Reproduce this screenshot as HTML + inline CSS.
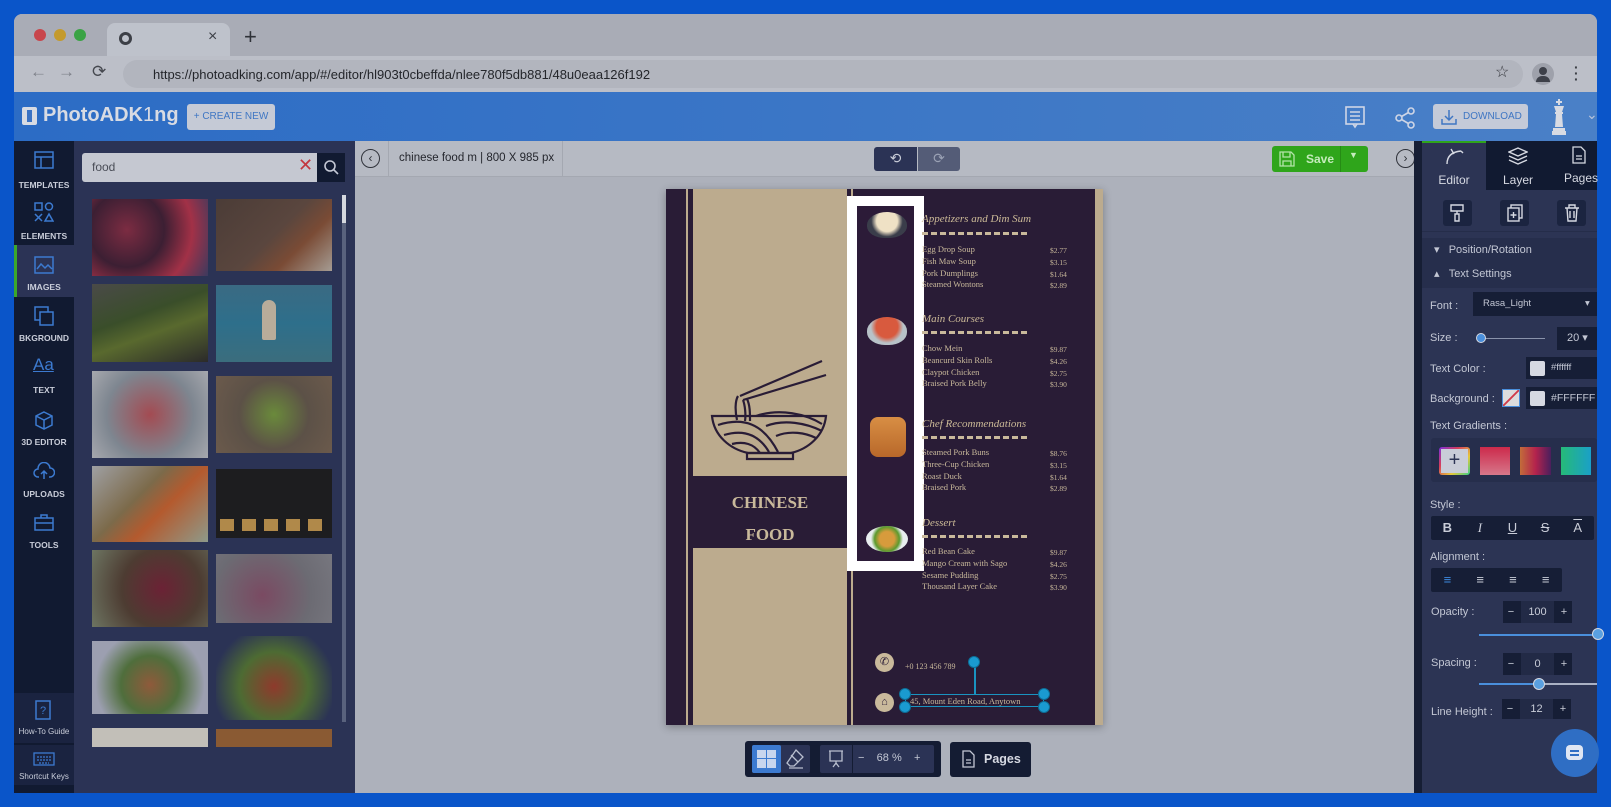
<!DOCTYPE html>
<html><head><meta charset="utf-8"><style>
*{margin:0;padding:0;box-sizing:border-box}
body{width:1611px;height:807px;background:#0a55c9;position:relative;overflow:hidden;font-family:"Liberation Sans",sans-serif}
.a{position:absolute}
.lbl{color:#c9cdd9;font-size:8.5px;font-weight:bold;text-align:center;width:60px;left:14px}
.rl{color:#c3c7d4;font-size:11px}
.mt{color:#c9b99b;font-family:"Liberation Serif",serif;font-size:8.5px;left:922px}
.mp{color:#c9b99b;font-family:"Liberation Serif",serif;font-size:7.5px;left:1050px}
.mh{color:#cdbb98;font-family:"Liberation Serif",serif;font-style:italic;font-size:11px;left:922px}
.dash{left:922px;width:106px;height:3px;background:repeating-linear-gradient(90deg,#c9b99b 0 6px,transparent 6px 9px)}
.btn{background:#1b2440;border-radius:3px}
</style></head><body>
<div class="a" style="left:14px;top:14px;width:1583px;height:779px;background:#acb0ba;border-radius:8px 8px 0 0"></div>
<div class="a" style="left:14px;top:14px;width:1583px;height:42px;background:#a9acb6;border-radius:8px 8px 0 0"></div>
<div class="a" style="left:34px;top:29px;width:12px;height:12px;border-radius:50%;background:#c8464c"></div>
<div class="a" style="left:54px;top:29px;width:12px;height:12px;border-radius:50%;background:#c49a2c"></div>
<div class="a" style="left:74px;top:29px;width:12px;height:12px;border-radius:50%;background:#3aa345"></div>
<div class="a" style="left:107px;top:23px;width:123px;height:33px;background:#bec2cb;border-radius:8px 8px 0 0"></div>
<div class="a" style="left:119px;top:32px;width:13px;height:13px;border-radius:50%;border:3px solid #3c3f46"></div>
<div class="a" style="left:208px;top:28px;color:#3c3f46;font-size:16px">×</div>
<div class="a" style="left:244px;top:24px;color:#2f3238;font-size:22px">+</div>
<div class="a" style="left:14px;top:56px;width:1583px;height:36px;background:#bcbfc8"></div>
<div class="a" style="left:30px;top:62px;color:#7d8089;font-size:17px">←</div>
<div class="a" style="left:58px;top:62px;color:#7d8089;font-size:17px">→</div>
<div class="a" style="left:92px;top:62px;color:#45484f;font-size:17px">⟳</div>
<div class="a" style="left:123px;top:60px;width:1400px;height:28px;background:#b2b5be;border-radius:14px"></div>
<div class="a" style="left:153px;top:67px;color:#24262b;font-size:13px">https://photoadking.com/app/#/editor/hl903t0cbeffda/nlee780f5db881/48u0eaa126f192</div>
<div class="a" style="left:1495px;top:62px;color:#34363c;font-size:16px">☆</div>
<div class="a" style="left:1532px;top:63px;width:22px;height:22px;border-radius:50%;background:#9ea1ab"></div>
<div class="a" style="left:1539px;top:67px;width:8px;height:8px;border-radius:50%;background:#3d4049"></div>
<div class="a" style="left:1536px;top:76px;width:14px;height:6px;border-radius:6px 6px 0 0;background:#3d4049"></div>
<div class="a" style="left:1574px;top:64px;color:#3c3f46;font-size:14px;font-weight:bold;line-height:6px">·<br>·<br>·</div>
<div class="a" style="left:14px;top:92px;width:1583px;height:49px;background:linear-gradient(90deg,#2c6cc5,#4a80c7)"></div>
<div class="a" style="left:22px;top:107px;width:15px;height:18px;background:#d8dbe3;border-radius:2px"></div>
<div class="a" style="left:27px;top:110px;width:5px;height:12px;background:#3a72c4"></div>
<div class="a" style="left:43px;top:104px;color:#d8dbe3;font-size:20px;font-weight:bold">PhotoADK<span style="font-weight:normal">1</span>ng</div>
<div class="a" style="left:187px;top:104px;width:88px;height:26px;background:#c5cad6;border-radius:3px;color:#3f76c3;font-size:10px;line-height:26px;text-align:center">+ CREATE NEW</div>
<svg class="a" style="left:1343px;top:105px" width="24" height="24" viewBox="0 0 24 24" fill="none" stroke="#cfd6e6" stroke-width="1.6"><rect x="3" y="2" width="18" height="17"/><path d="M7 7h10M7 11h10M7 15h10M10 19l2 3 2-3"/></svg>
<svg class="a" style="left:1393px;top:106px" width="24" height="24" viewBox="0 0 24 24" fill="none" stroke="#cfd6e6" stroke-width="1.6"><circle cx="18" cy="5" r="3"/><circle cx="6" cy="12" r="3"/><circle cx="18" cy="19" r="3"/><path d="M8.6 10.5l6.8-4M8.6 13.5l6.8 4"/></svg>
<div class="a" style="left:1433px;top:104px;width:95px;height:25px;background:#c4cad8;border-radius:3px;color:#3f76c3;font-size:10px;line-height:25px;padding-left:30px">DOWNLOAD</div>
<svg class="a" style="left:1440px;top:108px" width="18" height="18" viewBox="0 0 18 18" fill="none" stroke="#3f76c3" stroke-width="1.5"><path d="M9 2v10M5 8l4 4 4-4M2 11v5h14v-5"/></svg>
<svg class="a" style="left:1551px;top:99px" width="16" height="36" viewBox="0 0 16 36" fill="#d8dbe3"><rect x="7" y="0" width="2" height="6"/><rect x="5" y="2" width="6" height="2"/><path d="M3 7h10l-2 6H5z"/><rect x="4" y="13" width="8" height="2"/><path d="M5 15h6l1 13H4z"/><path d="M2 29h12v3H2zM1 32h14v4H1z"/></svg>
<div class="a" style="left:1586px;top:106px;color:#b8c4dc;font-size:14px">⌄</div>
<div class="a" style="left:14px;top:141px;width:60px;height:652px;background:#111a31"></div>
<div class="a" style="left:14px;top:245px;width:60px;height:52px;background:#2b3355;border-left:3px solid #3ba82c"></div>
<div class="a" style="left:14px;top:693px;width:60px;height:50px;background:#1a2340"></div>
<div class="a" style="left:14px;top:745px;width:60px;height:40px;background:#1a2340"></div>
<svg class="a" style="left:34px;top:151px" width="20" height="18" fill="none" stroke="#3c7ad0" stroke-width="1.5"><rect x="1" y="1" width="18" height="16"/><path d="M1 6h18M7 6v11"/></svg>
<div class="a lbl" style="top:180px">TEMPLATES</div>
<svg class="a" style="left:34px;top:202px" width="20" height="20" fill="none" stroke="#3c7ad0" stroke-width="1.5"><rect x="1" y="1" width="7" height="7"/><circle cx="15" cy="4.5" r="3.5"/><path d="M1 12l7 7M8 12l-7 7M15 12l4 7h-8z"/></svg>
<div class="a lbl" style="top:231px">ELEMENTS</div>
<svg class="a" style="left:34px;top:256px" width="20" height="18" fill="none" stroke="#3c7ad0" stroke-width="1.5"><rect x="1" y="1" width="18" height="16"/><path d="M3 13l4-5 4 4 3-3 4 4"/></svg>
<div class="a lbl" style="top:282px">IMAGES</div>
<svg class="a" style="left:34px;top:306px" width="20" height="20" fill="none" stroke="#3c7ad0" stroke-width="1.5"><rect x="1" y="1" width="13" height="13"/><rect x="6" y="6" width="13" height="13" fill="#111a31"/></svg>
<div class="a lbl" style="top:333px">BKGROUND</div>
<div class="a" style="left:33px;top:355px;color:#3c7ad0;font-size:17px;text-decoration:underline">Aa</div>
<div class="a lbl" style="top:385px">TEXT</div>
<svg class="a" style="left:34px;top:410px" width="20" height="20" fill="none" stroke="#3c7ad0" stroke-width="1.5"><path d="M10 2l8 4v9l-8 4-8-4V6z M2 6l8 4 8-4M10 10v9"/></svg>
<div class="a lbl" style="top:437px">3D EDITOR</div>
<svg class="a" style="left:33px;top:462px" width="22" height="18" fill="none" stroke="#3c7ad0" stroke-width="1.5"><path d="M6 15H5a4 4 0 010-8 6 6 0 0112-1 4 4 0 010 9h-1M11 17V9M8 12l3-3 3 3"/></svg>
<div class="a lbl" style="top:489px">UPLOADS</div>
<svg class="a" style="left:34px;top:513px" width="20" height="18" fill="none" stroke="#3c7ad0" stroke-width="1.5"><rect x="1" y="5" width="18" height="12"/><path d="M7 5V2h6v3M1 10h18"/></svg>
<div class="a lbl" style="top:540px">TOOLS</div>
<svg class="a" style="left:35px;top:700px" width="16" height="22" fill="none" stroke="#3c7ad0" stroke-width="1.5"><rect x="1" y="1" width="14" height="18"/><text x="5" y="14" font-size="11" fill="#3c7ad0" stroke="none" font-family="Liberation Sans">?</text></svg>
<div class="a lbl" style="top:727px;font-size:8px;font-weight:normal">How-To Guide</div>
<svg class="a" style="left:33px;top:752px" width="22" height="14" fill="none" stroke="#3c7ad0" stroke-width="1.3"><rect x="1" y="1" width="20" height="12"/><path d="M4 5h14M4 8h14M6 11h10" stroke-dasharray="2 1"/></svg>
<div class="a lbl" style="top:772px;font-size:8px;font-weight:normal">Shortcut Keys</div>
<div class="a" style="left:74px;top:141px;width:281px;height:652px;background:#2b3355"></div>
<div class="a" style="left:82px;top:153px;width:235px;height:29px;background:#c5c8d1;border-radius:3px 0 0 3px"></div>
<div class="a" style="left:92px;top:160px;color:#4a4d57;font-size:12px">food</div>
<div class="a" style="left:298px;top:155px;color:#c3363e;font-size:18px">✕</div>
<div class="a" style="left:317px;top:153px;width:28px;height:29px;background:#111a31"></div>
<svg class="a" style="left:323px;top:159px" width="16" height="16" fill="none" stroke="#c3c7d4" stroke-width="1.6"><circle cx="7" cy="7" r="5"/><path d="M11 11l4 4"/></svg>
<div class="a" style="left:342px;top:195px;width:4px;height:527px;background:#59627d"></div>
<div class="a" style="left:342px;top:195px;width:4px;height:28px;background:#d4d7de"></div>
<div class="a" style="left:92px;top:199px;width:116px;height:77px;background:radial-gradient(circle at 30% 40%,#7c2c42,#3c1f33 40%,#a23147 70%,#3b3a5e)"></div>
<div class="a" style="left:216px;top:199px;width:116px;height:72px;background:linear-gradient(135deg,#4b3c37,#5a463e 50%,#7a4b35 70%,#a59c93)"></div>
<div class="a" style="left:92px;top:284px;width:116px;height:78px;background:linear-gradient(160deg,#4a4a48,#3a4e2a 40%,#59692e 60%,#2b2a2a)"></div>
<div class="a" style="left:216px;top:285px;width:116px;height:77px;background:linear-gradient(180deg,#3a6a83,#2e6f8b 50%,#3b6d7d)"></div>
<div class="a" style="left:262px;top:300px;width:14px;height:40px;background:#b8ac9a;border-radius:7px 7px 2px 2px"></div>
<div class="a" style="left:92px;top:371px;width:116px;height:87px;background:radial-gradient(circle at 50% 50%,#a34b52,#7e8690 60%,#a6a8ae)"></div>
<div class="a" style="left:216px;top:376px;width:116px;height:77px;background:radial-gradient(circle at 50% 50%,#6a8a3b,#5c5147 50%,#6b5a4c)"></div>
<div class="a" style="left:92px;top:466px;width:116px;height:76px;background:linear-gradient(135deg,#9fa0a3,#7c6a4a 40%,#b45a2e 60%,#8e9a8a)"></div>
<div class="a" style="left:216px;top:469px;width:116px;height:69px;background:#1d1d1f"></div>
<div class="a" style="left:220px;top:519px;width:108px;height:12px;background:repeating-linear-gradient(90deg,#b0894a 0 14px,#1d1d1f 14px 22px)"></div>
<div class="a" style="left:92px;top:550px;width:116px;height:77px;background:radial-gradient(circle at 60% 50%,#6b2235,#4d3c32 50%,#6d7562)"></div>
<div class="a" style="left:216px;top:554px;width:116px;height:69px;background:radial-gradient(circle at 40% 60%,#7a4a62,#6c6b73 60%,#77777f)"></div>
<div class="a" style="left:92px;top:641px;width:116px;height:73px;background:radial-gradient(circle at 50% 60%,#8f5a3b,#4f6e3c 40%,#9c9fb0 75%)"></div>
<div class="a" style="left:216px;top:636px;width:116px;height:84px;background:radial-gradient(circle at 50% 60%,#8e3a2c,#4d6b33 45%,#2b3355 80%)"></div>
<div class="a" style="left:92px;top:728px;width:116px;height:19px;background:#c2bfb8"></div>
<div class="a" style="left:216px;top:729px;width:116px;height:18px;background:#8a5a33"></div>
<div class="a" style="left:355px;top:141px;width:1059px;height:652px;background:#adb1bb"></div>
<div class="a" style="left:355px;top:141px;width:1059px;height:36px;background:#b6bac3;border-bottom:1px solid #a4a8b1"></div>
<div class="a" style="left:361px;top:149px;width:19px;height:19px;border-radius:50%;border:1.5px solid #30333b;color:#30333b;font-size:12px;line-height:16px;text-align:center">‹</div>
<div class="a" style="left:388px;top:141px;width:1px;height:36px;background:#a4a8b1"></div>
<div class="a" style="left:399px;top:152px;color:#24262d;font-size:11.5px">chinese food m | 800 X 985 px</div>
<div class="a" style="left:562px;top:141px;width:1px;height:36px;background:#a4a8b1"></div>
<div class="a" style="left:874px;top:147px;width:43px;height:24px;background:#2b3355;border-radius:3px 0 0 3px;color:#c9cdd8;font-size:14px;text-align:center;line-height:22px">⟲</div>
<div class="a" style="left:918px;top:147px;width:42px;height:24px;background:#545c77;border-radius:0 3px 3px 0;color:#9aa1b4;font-size:14px;text-align:center;line-height:22px">⟳</div>
<div class="a" style="left:1272px;top:146px;width:96px;height:26px;background:#2fa51b;border-radius:3px"></div>
<div class="a" style="left:1340px;top:146px;width:1px;height:26px;background:#268b15"></div>
<svg class="a" style="left:1279px;top:151px" width="16" height="16" fill="none" stroke="#b3e4a8" stroke-width="1.3"><path d="M1 1h11l3 3v11H1z M4 1v5h7V1M4 15v-5h8v5"/></svg>
<div class="a" style="left:1306px;top:152px;color:#c5ecbd;font-size:12px;font-weight:bold">Save</div>
<div class="a" style="left:1349px;top:150px;color:#c5ecbd;font-size:9px">▼</div>
<div class="a" style="left:1396px;top:149px;width:19px;height:19px;border-radius:50%;border:1.5px solid #30333b;color:#30333b;font-size:12px;line-height:16px;text-align:center">›</div>
<div class="a" style="left:1414px;top:141px;width:8px;height:652px;background:#161e34"></div>
<div class="a" style="left:666px;top:189px;width:437px;height:536px;background:#291c36;box-shadow:0 2px 8px rgba(0,0,0,.3)"></div>
<div class="a" style="left:686px;top:189px;width:2px;height:536px;background:#bcab8e"></div>
<div class="a" style="left:693px;top:189px;width:154px;height:536px;background:#bcab8e"></div>
<div class="a" style="left:693px;top:476px;width:154px;height:72px;background:#291c36"></div>
<div class="a" style="left:693px;top:487px;width:154px;text-align:center;color:#c9b99b;font-family:'Liberation Serif',serif;font-weight:bold;font-size:17px;line-height:32px">CHINESE<br>FOOD</div>
<div class="a" style="left:851px;top:189px;width:2px;height:536px;background:#bcab8e"></div>
<div class="a" style="left:1095px;top:189px;width:8px;height:536px;background:#bcab8e"></div>
<svg class="a" style="left:710px;top:358px" width="125" height="105" viewBox="0 0 125 105" fill="none" stroke="#291c36" stroke-width="2.2"><path d="M30 38L112 3M33 42L116 17M28 38c-3 5-3 15-1 24M33 42c2 5 3 15 2 21M37 41c3 6 3 14 3 22"/><path d="M2 58h114c-2 20-18 33-35 37H38C20 91 4 78 2 58z"/><path d="M37 95h46v6H37z"/><path d="M8 67c25-8 45-2 60 27M14 77c20-6 35 0 45 17M22 86c12-3 22 0 28 9M46 58c24-8 50-2 66 8M56 68c18-7 40-3 56 5M66 78c14-6 30-3 40 2"/></svg>
<div class="a" style="left:847px;top:196px;width:77px;height:375px;background:#fff"></div>
<div class="a" style="left:857px;top:206px;width:57px;height:355px;background:#2c1b38"></div>
<div class="a" style="left:867px;top:212px;width:40px;height:26px;border-radius:50% 50% 45% 45%;background:radial-gradient(circle at 50% 35%,#efe1c5 40%,#3a3d4a 60%)"></div>
<div class="a" style="left:867px;top:317px;width:40px;height:28px;border-radius:50% 50% 45% 45%;background:radial-gradient(circle at 50% 35%,#d85a3e 40%,#b8c2c8 60%)"></div>
<div class="a" style="left:870px;top:417px;width:36px;height:40px;border-radius:8px;background:linear-gradient(180deg,#d88e44,#b8682a)"></div>
<div class="a" style="left:866px;top:526px;width:42px;height:26px;border-radius:50%;background:radial-gradient(circle,#d79b3c 30%,#5c9a2e 50%,#e9eef0 65%)"></div>
<div class="a mh" style="top:213px">Appetizers and Dim Sum</div>
<div class="a dash" style="top:232px"></div>
<div class="a mt" style="top:244px;line-height:11.8px">Egg Drop Soup<br>Fish Maw Soup<br>Pork Dumplings<br>Steamed Wontons</div>
<div class="a mp" style="top:245px;line-height:11.8px">$2.77<br>$3.15<br>$1.64<br>$2.89</div>
<div class="a mh" style="top:313px">Main Courses</div>
<div class="a dash" style="top:331px"></div>
<div class="a mt" style="top:343px;line-height:11.8px">Chow Mein<br>Beancurd Skin Rolls<br>Claypot Chicken<br>Braised Pork Belly</div>
<div class="a mp" style="top:344px;line-height:11.8px">$9.87<br>$4.26<br>$2.75<br>$3.90</div>
<div class="a mh" style="top:418px">Chef Recommendations</div>
<div class="a dash" style="top:436px"></div>
<div class="a mt" style="top:447px;line-height:11.8px">Steamed Pork Buns<br>Three-Cup Chicken<br>Roast Duck<br>Braised Pork</div>
<div class="a mp" style="top:448px;line-height:11.8px">$8.76<br>$3.15<br>$1.64<br>$2.89</div>
<div class="a mh" style="top:517px">Dessert</div>
<div class="a dash" style="top:535px"></div>
<div class="a mt" style="top:546px;line-height:11.8px">Red Bean Cake<br>Mango Cream with Sago<br>Sesame Pudding<br>Thousand Layer Cake</div>
<div class="a mp" style="top:547px;line-height:11.8px">$9.87<br>$4.26<br>$2.75<br>$3.90</div>
<div class="a" style="left:875px;top:653px;width:19px;height:19px;border-radius:50%;background:#c9b99b;color:#291c36;font-size:11px;text-align:center;line-height:19px">✆</div>
<div class="a mt" style="left:905px;top:662px;font-size:8px">+0 123 456 789</div>
<div class="a" style="left:875px;top:693px;width:19px;height:19px;border-radius:50%;background:#c9b99b;color:#291c36;font-size:11px;text-align:center;line-height:19px">⌂</div>
<div class="a mt" style="left:910px;top:696px;font-size:8.5px">45, Mount Eden Road, Anytown</div>
<div class="a" style="left:974px;top:662px;width:1.5px;height:32px;background:#1a93c0"></div>
<div class="a" style="left:905px;top:694px;width:139px;height:13px;border:1.5px solid #1a93c0"></div>
<div class="a" style="left:968px;top:656px;width:12px;height:12px;border-radius:50%;background:#1a9ad0;border:1px solid #0d6f98"></div>
<div class="a" style="left:899px;top:688px;width:12px;height:12px;border-radius:50%;background:#1a9ad0;border:1px solid #0d6f98"></div>
<div class="a" style="left:1038px;top:688px;width:12px;height:12px;border-radius:50%;background:#1a9ad0;border:1px solid #0d6f98"></div>
<div class="a" style="left:899px;top:701px;width:12px;height:12px;border-radius:50%;background:#1a9ad0;border:1px solid #0d6f98"></div>
<div class="a" style="left:1038px;top:701px;width:12px;height:12px;border-radius:50%;background:#1a9ad0;border:1px solid #0d6f98"></div>
<div class="a" style="left:745px;top:741px;width:196px;height:36px;background:#141c33;border-radius:3px"></div>
<div class="a" style="left:752px;top:745px;width:58px;height:28px;background:#2b3355;border-radius:2px"></div>
<div class="a" style="left:752px;top:745px;width:29px;height:28px;background:#3c7ad0;border-radius:2px"></div>
<div class="a" style="left:757px;top:750px;width:9px;height:8px;background:#c9d6ee"></div><div class="a" style="left:767px;top:750px;width:9px;height:8px;background:#c9d6ee"></div>
<div class="a" style="left:757px;top:759px;width:9px;height:9px;background:#c9d6ee"></div><div class="a" style="left:767px;top:759px;width:9px;height:9px;background:#c9d6ee"></div>
<svg class="a" style="left:786px;top:749px" width="18" height="20" fill="none" stroke="#b9bfcf" stroke-width="1.3"><path d="M10 1l7 7-9 9H4l-3-3z M5 6l7 7M3 19h14"/></svg>
<div class="a" style="left:820px;top:745px;width:114px;height:28px;background:#2b3355;border-radius:2px"></div>
<div class="a" style="left:852px;top:745px;width:1px;height:28px;background:#141c33"></div>
<svg class="a" style="left:828px;top:750px" width="16" height="18" fill="none" stroke="#b9bfcf" stroke-width="1.3"><path d="M1 1h14M2 1v10h12V1M8 11v2M5 17l3-4 3 4"/></svg>
<div class="a" style="left:858px;top:752px;color:#c3c7d4;font-size:11px">−&nbsp;&nbsp;&nbsp;&nbsp;68 %&nbsp;&nbsp;&nbsp;&nbsp;+</div>
<div class="a" style="left:950px;top:742px;width:81px;height:35px;background:#141c33;border-radius:3px"></div>
<svg class="a" style="left:962px;top:750px" width="13" height="18" fill="none" stroke="#c3c7d4" stroke-width="1.3"><path d="M1 1h7l4 4v12H1z M4 10h5M4 13h5"/></svg>
<div class="a" style="left:984px;top:752px;color:#d6d9e2;font-size:12.5px;font-weight:bold">Pages</div>
<div class="a" style="left:1422px;top:141px;width:175px;height:652px;background:#2c3454"></div>
<div class="a" style="left:1486px;top:141px;width:111px;height:49px;background:#111a31"></div>
<div class="a" style="left:1422px;top:141px;width:64px;height:2px;background:#2fa51b"></div>
<svg class="a" style="left:1444px;top:146px" width="20" height="20" fill="none" stroke="#d6d9e2" stroke-width="1.4"><path d="M3 18c0-7 4-12 14-13M10 8l-3-5M17 5l2 2"/></svg>
<div class="a" style="left:1422px;top:173px;width:64px;text-align:center;color:#d6d9e2;font-size:12px">Editor</div>
<svg class="a" style="left:1508px;top:147px" width="20" height="18" fill="none" stroke="#d6d9e2" stroke-width="1.4"><path d="M10 1l9 4-9 4-9-4z M1 9l9 4 9-4M1 13l9 4 9-4"/></svg>
<div class="a" style="left:1486px;top:173px;width:64px;text-align:center;color:#d6d9e2;font-size:12px">Layer</div>
<svg class="a" style="left:1572px;top:146px" width="14" height="18" fill="none" stroke="#d6d9e2" stroke-width="1.3"><path d="M1 1h8l4 4v12H1z M4 10h6M4 13h6"/></svg>
<div class="a" style="left:1564px;top:171px;color:#d6d9e2;font-size:12px">Pages</div>
<div class="a btn" style="left:1443px;top:200px;width:29px;height:26px"></div>
<svg class="a" style="left:1449px;top:204px" width="16" height="18" fill="none" stroke="#d6d9e2" stroke-width="1.4"><path d="M2 1h12v6H2zM8 7v3M6 10h4v7H6z"/></svg>
<div class="a btn" style="left:1500px;top:200px;width:29px;height:26px"></div>
<svg class="a" style="left:1507px;top:204px" width="16" height="18" fill="none" stroke="#d6d9e2" stroke-width="1.4"><rect x="4" y="1" width="11" height="13"/><rect x="1" y="4" width="11" height="13" fill="#1b2440"/><path d="M6.5 8v6M3.5 11h6"/></svg>
<div class="a btn" style="left:1557px;top:200px;width:29px;height:26px"></div>
<svg class="a" style="left:1564px;top:204px" width="16" height="18" fill="none" stroke="#d6d9e2" stroke-width="1.4"><path d="M1 4h14M5 4V1h6v3M3 4l1 13h8l1-13M6 7v7M10 7v7"/></svg>
<div class="a" style="left:1422px;top:231px;width:175px;height:1px;background:#252d4a"></div>
<div class="a" style="left:1422px;top:238px;width:175px;height:50px;background:#262e4c"></div>
<div class="a rl" style="left:1434px;top:243px;font-size:11px">▾&nbsp;&nbsp;&nbsp;Position/Rotation</div>
<div class="a rl" style="left:1434px;top:267px;font-size:11px">▴&nbsp;&nbsp;&nbsp;Text Settings</div>
<div class="a rl" style="left:1430px;top:300px">Font :</div>
<div class="a" style="left:1473px;top:292px;width:124px;height:24px;background:#161e36;color:#c3c7d4;font-size:9.5px;line-height:24px;padding-left:10px">Rasa_Light<span style="position:absolute;left:112px">▾</span></div>
<div class="a rl" style="left:1430px;top:332px">Size :</div>
<div class="a" style="left:1480px;top:338px;width:65px;height:1px;background:#8a93ab"></div>
<div class="a" style="left:1476px;top:333px;width:10px;height:10px;border-radius:50%;background:#4a8fdc;border:1px solid #d6d9e2"></div>
<div class="a" style="left:1557px;top:327px;width:40px;height:23px;background:#161e36;color:#c3c7d4;font-size:11px;line-height:23px;padding-left:10px">20 ▾</div>
<div class="a rl" style="left:1430px;top:363px">Text Color :</div>
<div class="a" style="left:1526px;top:357px;width:71px;height:22px;background:#161e36;color:#c3c7d4;font-size:9.5px;line-height:22px;padding-left:25px">#ffffff</div>
<div class="a" style="left:1530px;top:361px;width:15px;height:15px;background:#d6d9e2;border-radius:2px"></div>
<div class="a rl" style="left:1430px;top:393px">Background :</div>
<div class="a" style="left:1502px;top:389px;width:18px;height:18px;border:1.5px solid #4a8fdc;background:linear-gradient(135deg,#ddd 45%,#d03a4a 47%,#d03a4a 53%,#ddd 55%)"></div>
<div class="a" style="left:1526px;top:387px;width:71px;height:22px;background:#161e36;color:#c3c7d4;font-size:10.5px;line-height:22px;padding-left:25px">#FFFFFF</div>
<div class="a" style="left:1530px;top:391px;width:15px;height:15px;background:#d6d9e2;border-radius:2px"></div>
<div class="a rl" style="left:1430px;top:420px">Text Gradients :</div>
<div class="a" style="left:1431px;top:438px;width:166px;height:44px;background:#262e4c;border-radius:3px"></div>
<div class="a" style="left:1439px;top:447px;width:31px;height:28px;border-radius:3px;background:linear-gradient(135deg,#7b2fe0,#d63d5b,#e6c83a,#35d08a);padding:2px"><div style="width:100%;height:100%;background:#c9cdd8;color:#2c3454;font-size:20px;text-align:center;line-height:23px">+</div></div>
<div class="a" style="left:1480px;top:447px;width:30px;height:28px;background:linear-gradient(180deg,#cc2a4b,#d7778a)"></div>
<div class="a" style="left:1520px;top:447px;width:31px;height:28px;background:linear-gradient(90deg,#c26c3a,#b4234d,#4a1f5d)"></div>
<div class="a" style="left:1561px;top:447px;width:30px;height:28px;background:linear-gradient(90deg,#26ba78,#1aa0c8)"></div>
<div class="a rl" style="left:1430px;top:499px">Style :</div>
<div class="a" style="left:1431px;top:516px;width:163px;height:24px;background:#161e36;border-radius:2px;color:#c9cdd8;font-size:13px;line-height:24px;display:flex"><span style="flex:1;text-align:center;font-weight:bold">B</span><span style="flex:1;text-align:center;font-style:italic;font-family:'Liberation Serif'">I</span><span style="flex:1;text-align:center;text-decoration:underline">U</span><span style="flex:1;text-align:center;text-decoration:line-through">S</span><span style="flex:1;text-align:center;text-decoration:overline">A</span></div>
<div class="a rl" style="left:1430px;top:551px">Alignment :</div>
<div class="a" style="left:1431px;top:568px;width:131px;height:24px;background:#161e36;border-radius:2px;color:#c9cdd8;font-size:13px;line-height:24px;display:flex"><span style="flex:1;text-align:center;color:#3c8ae0">≡</span><span style="flex:1;text-align:center">≡</span><span style="flex:1;text-align:center">≡</span><span style="flex:1;text-align:center">≡</span></div>
<div class="a rl" style="left:1431px;top:606px">Opacity :</div>
<div class="a" style="left:1503px;top:601px;width:69px;height:22px;background:#161e36;color:#c9cdd8;font-size:11px;line-height:22px;display:flex"><span style="width:16px;text-align:center">−</span><span style="flex:1;text-align:center;background:#222a46;margin:0 2px">100</span><span style="width:16px;text-align:center">+</span></div>
<div class="a" style="left:1479px;top:634px;width:118px;height:2px;background:#4a8fdc"></div>
<div class="a" style="left:1592px;top:628px;width:12px;height:12px;border-radius:50%;background:#5aa0e0;border:1px solid #d6d9e2"></div>
<div class="a rl" style="left:1431px;top:657px">Spacing :</div>
<div class="a" style="left:1503px;top:653px;width:69px;height:22px;background:#161e36;color:#c9cdd8;font-size:11px;line-height:22px;display:flex"><span style="width:16px;text-align:center">−</span><span style="flex:1;text-align:center;background:#222a46;margin:0 2px">0</span><span style="width:16px;text-align:center">+</span></div>
<div class="a" style="left:1479px;top:683px;width:56px;height:2px;background:#4a8fdc"></div>
<div class="a" style="left:1535px;top:683px;width:62px;height:2px;background:#aab1c4"></div>
<div class="a" style="left:1533px;top:678px;width:12px;height:12px;border-radius:50%;background:#5aa0e0;border:1px solid #d6d9e2"></div>
<div class="a rl" style="left:1431px;top:706px">Line Height :</div>
<div class="a" style="left:1502px;top:699px;width:69px;height:20px;background:#161e36;color:#c9cdd8;font-size:11px;line-height:20px;display:flex"><span style="width:16px;text-align:center">−</span><span style="flex:1;text-align:center;background:#222a46;margin:0 2px">12</span><span style="width:16px;text-align:center">+</span></div>
<div class="a" style="left:1551px;top:729px;width:48px;height:48px;border-radius:50%;background:#2f6ec4"></div>
<div class="a" style="left:1566px;top:745px;width:17px;height:15px;border-radius:4px;background:#dfe6f3"></div>
<div class="a" style="left:1570px;top:750px;width:9px;height:1.5px;background:#2f6ec4"></div>
<div class="a" style="left:1570px;top:754px;width:9px;height:1.5px;background:#2f6ec4"></div>
</body></html>
